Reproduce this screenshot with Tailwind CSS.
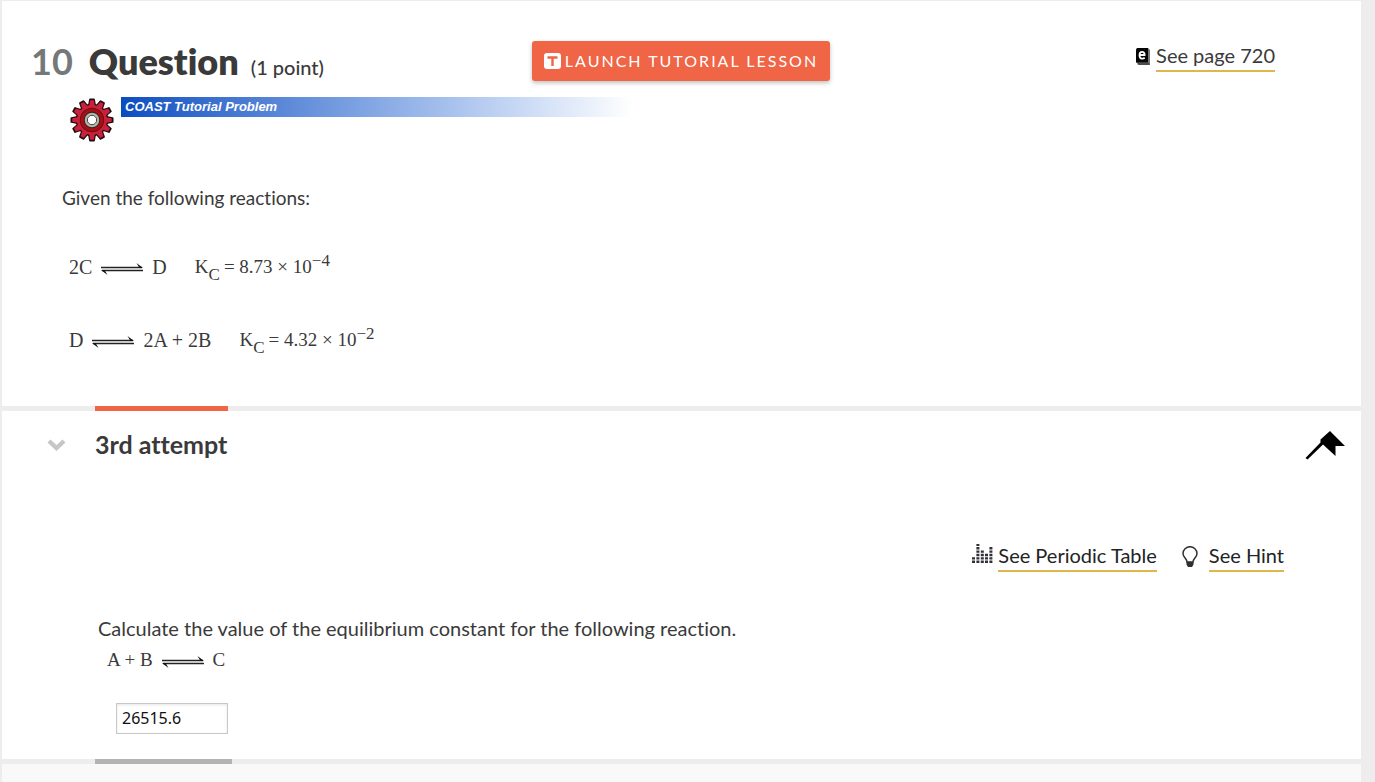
<!DOCTYPE html>
<html lang="en">
<head>
  <meta charset="UTF-8">
  <title>Question 10</title>
  <script src="https://cdn.jsdelivr.net/npm/@tailwindcss/browser@4"></script>
</head>
<body class="bg-[#ededed] min-h-screen flex flex-col pl-[2px] pr-[14px] pt-px font-[Lato,sans-serif] [font-variant-ligatures:none] text-[#3a3a3a]">
  <!-- half arrows shared by the equations -->
  <svg class="hidden">
    <symbol id="equilibrium" viewBox="0 0 42 14">
      <path d="M0 5.5H41M1 8.5H42" fill="none" stroke="#222" stroke-width="1.4" />
      <path d="M35.500 1L42 6H38.500ZM6.500 13L0 8H3.500Z" fill="#111" />
    </symbol>
  </svg>

  <section class="bg-white pt-10 pb-[46px]">
    <header class="flex items-start pl-[29px] pr-[86px]">
      <h1 class="w-[501px] h-10 flex items-baseline text-[36px] leading-10">
        <span class="text-[#747878] font-bold mr-4">10</span>
        <span class="font-extrabold mr-3">Question</span>
        <span class="text-[20px] font-medium">(1 point)</span>
      </h1>
      <button class="h-10 w-[298px] rounded-[3px] bg-[#ef6545] text-white shadow-[0_2px_4px_rgba(0,0,0,0.25)] flex items-center justify-center gap-1 text-[16px] tracking-[2px] whitespace-nowrap">
        <svg class="w-[17px] h-4 shrink-0" viewBox="0 0 17 16">
          <rect width="17" height="16" rx="3" fill="#fff" />
          <path d="M3.5 4.5H13.5M8.5 4.5V13" fill="none" stroke="#ef6545" stroke-width="2.4" />
        </svg>
        LAUNCH TUTORIAL LESSON
      </button>
      <div class="ml-auto flex items-center gap-[6px]">
        <svg class="w-[14px] h-[18px]" viewBox="0 0 14 18">
          <path d="M1 0H12L14 2V17H3L0 14V1Z" fill="#777" />
          <path d="M1.5 0H12V14.500H0V1.5Z" fill="#050505" />
          <path d="M1.5 16H13.5" stroke="#222" stroke-width="1" />
          <path d="M3.8 7H8.6C8.8 2.8 3.5 2.8 3.5 7.2C3.5 11.2 7 11.2 8.7 9.8" fill="none" stroke="#fff" stroke-width="1.8" />
        </svg>
        <a href="#" class="border-b-2 border-[#e0b74e] text-[20px] leading-[29px]">See page 720</a>
      </div>
    </header>

    <div class="flex items-start pl-[68px] mt-4">
      <svg class="w-[44px] h-[46px] mr-[7px]" viewBox="-23 -23 46 46">
        <defs>
          <path id="tooth" d="M-3.4 -14L-2 -21.500H2L3.4 -14V14L2 21.500H-2L-3.4 14Z" />
          <g id="teeth">
            <use href="#tooth" />
            <use href="#tooth" transform="rotate(30)" />
            <use href="#tooth" transform="rotate(60)" />
            <use href="#tooth" transform="rotate(90)" />
            <use href="#tooth" transform="rotate(120)" />
            <use href="#tooth" transform="rotate(150)" />
          </g>
        </defs>
        <g fill="#240a0e" stroke="#240a0e" stroke-width="2" stroke-linejoin="round"><use href="#teeth" /><circle r="16" /></g>
        <g fill="#c9213b"><use href="#teeth" transform="scale(.96)" /><circle r="15.600" /></g>
        <circle r="12.2" fill="#a51018" stroke="#7d0c12" stroke-width="1.2" />
        <circle r="6.500" fill="#fff" stroke="#222" stroke-width="4" />
        <circle r="6.400" fill="#fff" stroke="#b8b6a8" stroke-width="2.400" />
        <circle r="4.900" fill="#fff" stroke="#333" stroke-width="1" />
      </svg>
      <div class="w-[512px] h-5 pl-1 bg-linear-to-r from-[#084dc0] to-white font-['Liberation_Sans',sans-serif] font-bold italic text-[13px] leading-5 text-white">COAST Tutorial Problem</div>
    </div>

    <p class="pl-[60px] mt-[39px] text-[19px] leading-8">Given the following reactions:</p>

    <div class="pl-[67px] mt-[33px] font-['Liberation_Serif',serif] text-[20px]">
      <div class="flex items-center h-10">
        <span>2C</span>
        <svg class="w-[42px] h-[14px] mt-1 mx-[9px]"><use href="#equilibrium" /></svg>
        <span>D</span>
        <span class="ml-7 text-[19px] flex items-center"><span>K</span><sub class="top-2 relative text-[17px] mr-1">C</sub><span>= 8.73 × 10</span><sup class="text-[17px] -top-[6px] relative">−4</sup></span>
      </div>
      <div class="flex items-center h-10 mt-[33px]">
        <span>D</span>
        <svg class="w-[42px] h-[14px] mt-1 mx-[9px]"><use href="#equilibrium" /></svg>
        <span>2A + 2B</span>
        <span class="ml-7 text-[19px] flex items-center"><span>K</span><sub class="top-2 relative text-[17px] mr-1">C</sub><span>= 4.32 × 10</span><sup class="text-[17px] -top-[6px] relative">−2</sup></span>
      </div>
    </div>
  </section>

  <div class="h-[5px] shrink-0 pl-[93px]"><div class="h-full w-[133px] bg-[#ef6545]"></div></div>

  <section class="bg-white pt-4 pb-[25px]">
    <div class="flex items-center pl-[45px] pr-4 h-9">
      <button aria-label="Collapse attempt" class="w-[19px] mr-[29px]">
        <svg class="w-[19px] h-[14px]" viewBox="0 0 19 14"><path d="M2 3L9.5 10L17 3" fill="none" stroke="#c6c6c6" stroke-width="4.4" /></svg>
      </button>
      <h2 class="text-[25px] leading-[34px] pb-[2px] font-bold">3rd attempt</h2>
      <button aria-label="Pin question" class="ml-auto">
        <svg class="w-10 h-[30px]" viewBox="0 0 40 30"><path d="M25 1L40 16H30.500V26L18 14.500L2.500 29.500L0.500 28L15.500 12.500V9.500Z" fill="#000" /></svg>
      </button>
    </div>

    <div class="flex justify-end items-center pr-[77px] mt-[78px] text-[20px] text-[#232323]">
      <svg class="w-[21px] h-5 mr-[5px] mb-[6px]" viewBox="0 0 21 20" fill="none" stroke="#303038" stroke-width="3" stroke-dasharray="2.4 1">
        <path d="M1.500 19V13M5.900 19V0M10.300 19V6M14.500 19V9M18.900 19V3" />
      </svg>
      <a href="#" class="border-b-2 border-[#e0b74e] leading-[29px]">See Periodic Table</a>
      <svg class="w-4 h-[22px] ml-[25px] mr-[11px]" viewBox="0 0 16 22">
        <path d="M5 16C5 12.500 1 11.500 1 7.500A7 6.800 0 0 1 15 7.500C15 11.500 11 12.500 11 16Z" fill="none" stroke="#303030" stroke-width="1.500" />
        <path d="M4.500 16H11.500V18.500L10 21H6L4.500 18.500Z" fill="#303030" />
      </svg>
      <a href="#" class="border-b-2 border-[#e0b74e] leading-[29px]">See Hint</a>
    </div>

    <div class="pl-[96px] mt-10">
      <label for="answer" class="block text-[20px] leading-8">Calculate the value of the equilibrium constant for the following reaction.</label>
      <div class="flex items-center pl-[9px] h-8 font-['Liberation_Serif',serif] text-[19px]">
        <span>A + B</span>
        <svg class="w-[42px] h-[14px] mt-1 mx-[9px]"><use href="#equilibrium" /></svg>
        <span>C</span>
      </div>
      <input id="answer" type="text" value="26515.6" class="block ml-[18px] mt-[27px] w-28 h-[31px] border border-[#c8c8c8] px-[5px] pb-[2px] font-['Noto_Sans',sans-serif] text-[16px] text-[#111] shadow-[inset_0_1px_3px_rgba(0,0,0,0.1)]">
    </div>
  </section>

  <div class="h-[5px] shrink-0 pl-[93px]"><div class="h-full w-[137px] bg-[#b3b3b3]"></div></div>
  <footer class="bg-[#f9f9f9] grow"></footer>
</body>
</html>
